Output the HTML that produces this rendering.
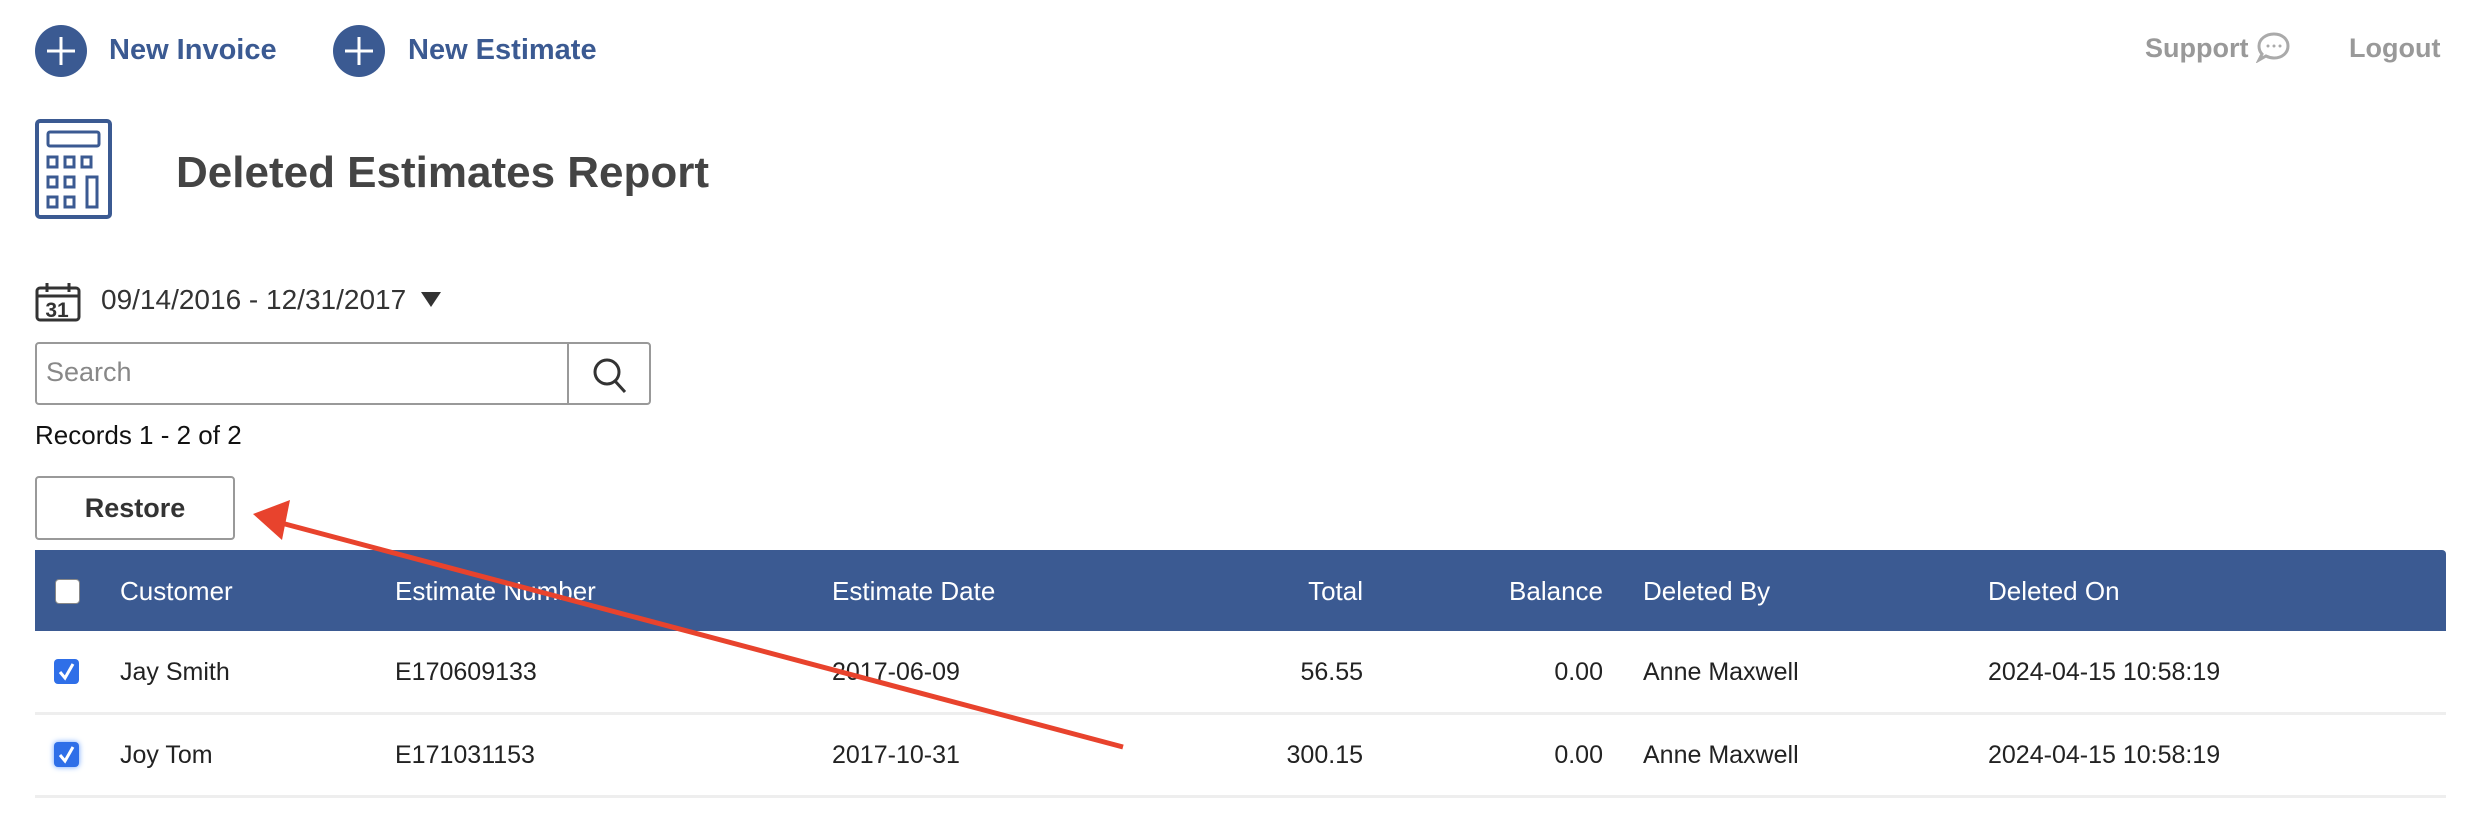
<!DOCTYPE html>
<html><head><meta charset="utf-8"><style>
*{margin:0;padding:0;box-sizing:border-box}
body{width:2474px;height:834px;background:#fff;font-family:"Liberation Sans",sans-serif;position:relative;overflow:hidden}
.a{position:absolute;white-space:nowrap}
.nav{color:#3b5a92;font-size:29px;font-weight:bold;top:34px}
.th{color:#fff;font-size:26px;top:576px}
.td{color:#222;font-size:25px}
.r{text-align:right}
.cb{position:absolute;width:25px;height:25px;border-radius:4px;background:#2f6fe8;left:54px}
</style></head><body>
<svg class="a" style="left:35px;top:25px" width="52" height="52"><circle cx="26" cy="26" r="26" fill="#3b5a92"/><path d="M26 12V40M12 26H40" stroke="#fff" stroke-width="3"/></svg>
<div class="a nav" style="left:109px">New Invoice</div>
<svg class="a" style="left:333px;top:25px" width="52" height="52"><circle cx="26" cy="26" r="26" fill="#3b5a92"/><path d="M26 12V40M12 26H40" stroke="#fff" stroke-width="3"/></svg>
<div class="a nav" style="left:408px">New Estimate</div>
<div class="a" style="left:2145px;top:33px;color:#999;font-size:27px;font-weight:bold">Support</div>
<svg class="a" style="left:2256px;top:31px" width="36" height="32"><path d="M18 3C26 3 32 8 32 15C32 22 26 27 18 27C15 27 12 26 10 25L3 29L6 23C4 21 3 18 3 15C3 8 10 3 18 3Z" fill="none" stroke="#aaa" stroke-width="3"/><circle cx="12" cy="15" r="1.5" fill="#aaa"/><circle cx="18" cy="15" r="1.5" fill="#aaa"/><circle cx="24" cy="15" r="1.5" fill="#aaa"/></svg>
<div class="a" style="left:2349px;top:33px;color:#999;font-size:27px;font-weight:bold">Logout</div>
<svg class="a" style="left:35px;top:119px" width="77" height="100"><rect x="2" y="2" width="73" height="96" rx="3" fill="none" stroke="#3b5a92" stroke-width="4"/><rect x="13" y="13" width="51" height="14" rx="2" fill="none" stroke="#3b5a92" stroke-width="3"/>
<g fill="none" stroke="#3b5a92" stroke-width="3"><rect x="13" y="38" width="9" height="10"/><rect x="30" y="38" width="9" height="10"/><rect x="47" y="38" width="9" height="10"/><rect x="13" y="58" width="9" height="10"/><rect x="30" y="58" width="9" height="10"/><rect x="13" y="78" width="9" height="10"/><rect x="30" y="78" width="9" height="10"/><rect x="52" y="58" width="10" height="30"/></g></svg>
<div class="a" style="left:176px;top:148px;color:#444;font-size:44px;font-weight:bold">Deleted Estimates Report</div>
<svg class="a" style="left:35px;top:282px" width="46" height="40"><rect x="2" y="6" width="42" height="32" rx="3" fill="none" stroke="#333" stroke-width="3"/><path d="M2 14H44M12 1V10M34 1V10" stroke="#333" stroke-width="3"/><text x="22" y="35" font-size="21" font-weight="bold" text-anchor="middle" fill="#333" font-family="Liberation Sans">31</text></svg>
<div class="a" style="left:101px;top:284px;color:#333;font-size:28px">09/14/2016 - 12/31/2017</div>
<svg class="a" style="left:421px;top:292px" width="20" height="16"><path d="M0 0H20L10 15Z" fill="#333"/></svg>
<div class="a" style="left:35px;top:342px;width:616px;height:63px;border:2px solid #999;border-radius:4px"></div>
<div class="a" style="left:567px;top:344px;width:2px;height:59px;background:#999"></div>
<div class="a" style="left:46px;top:357px;color:#888;font-size:27px">Search</div>
<svg class="a" style="left:590px;top:355px" width="40" height="40"><circle cx="17" cy="17" r="12" fill="none" stroke="#333" stroke-width="3"/><path d="M25 26L35 37" stroke="#333" stroke-width="3"/></svg>
<div class="a" style="left:35px;top:420px;color:#111;font-size:26px">Records 1 - 2 of 2</div>
<div class="a" style="left:35px;top:476px;width:200px;height:64px;border:2px solid #999;border-radius:4px;color:#333;font-size:27px;font-weight:bold;text-align:center;line-height:60px">Restore</div>
<div class="a" style="left:35px;top:550px;width:2411px;height:81px;background:#3b5a92;border-radius:0 4px 0 0"></div>
<div class="a" style="left:55px;top:579px;width:25px;height:25px;background:#fff;border-radius:4px;border:1px solid #888"></div>
<div class="a th" style="left:120px">Customer</div>
<div class="a th" style="left:395px">Estimate Number</div>
<div class="a th" style="left:832px">Estimate Date</div>
<div class="a th r" style="left:1163px;width:200px">Total</div>
<div class="a th r" style="left:1403px;width:200px">Balance</div>
<div class="a th" style="left:1643px">Deleted By</div>
<div class="a th" style="left:1988px">Deleted On</div>
<div class="a" style="left:35px;top:712px;width:2411px;height:3px;background:#eee"></div>
<div class="a" style="left:35px;top:795px;width:2411px;height:3px;background:#eee"></div>
<div class="cb" style="top:659px"></div><svg class="a" style="left:54px;top:659px" width="25" height="25"><path d="M6 13L11 19L19 5" fill="none" stroke="#fff" stroke-width="3"/></svg>
<div class="cb" style="top:742px;box-shadow:0 0 6px #6aa0ff"></div><svg class="a" style="left:54px;top:742px" width="25" height="25"><path d="M6 13L11 19L19 5" fill="none" stroke="#fff" stroke-width="3"/></svg>
<div class="a td" style="left:120px;top:658px">Jay Smith</div>
<div class="a td" style="left:395px;top:658px">E170609133</div>
<div class="a td" style="left:832px;top:658px">2017-06-09</div>
<div class="a td r" style="left:1163px;top:658px;width:200px">56.55</div>
<div class="a td r" style="left:1403px;top:658px;width:200px">0.00</div>
<div class="a td" style="left:1643px;top:658px">Anne Maxwell</div>
<div class="a td" style="left:1988px;top:658px">2024-04-15 10:58:19</div>
<div class="a td" style="left:120px;top:741px">Joy Tom</div>
<div class="a td" style="left:395px;top:741px">E171031153</div>
<div class="a td" style="left:832px;top:741px">2017-10-31</div>
<div class="a td r" style="left:1163px;top:741px;width:200px">300.15</div>
<div class="a td r" style="left:1403px;top:741px;width:200px">0.00</div>
<div class="a td" style="left:1643px;top:741px">Anne Maxwell</div>
<div class="a td" style="left:1988px;top:741px">2024-04-15 10:58:19</div>
<svg class="a" style="left:0;top:0" width="2474" height="834"><path d="M1123 747L270 520" stroke="#e8432d" stroke-width="5"/><path d="M253 514L290 500L282 540Z" fill="#e8432d"/></svg>
</body></html>
